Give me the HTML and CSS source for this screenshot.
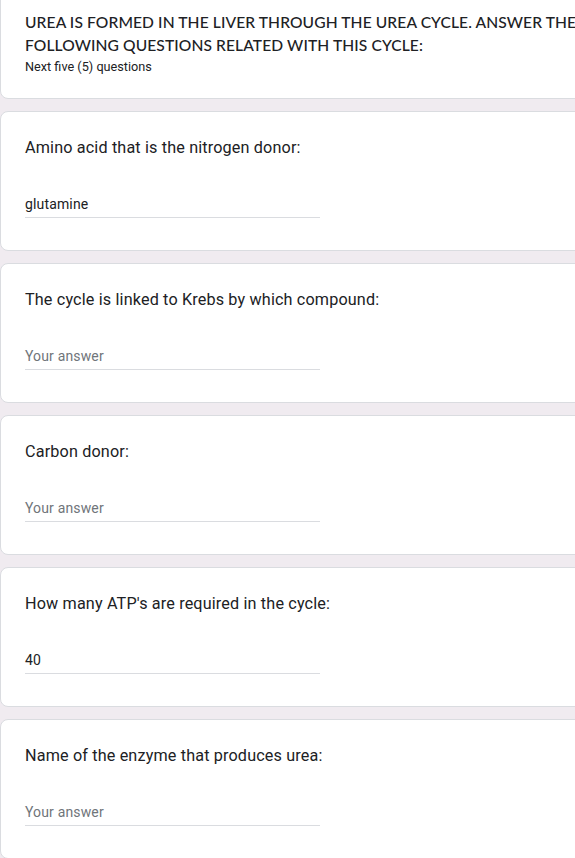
FILE: index.html
```html
<!DOCTYPE html>
<html>
<head>
<meta charset="utf-8">
<link rel="stylesheet" href="styles.css">
</head>
<body>
<div class="page">
  <div class="card header">
    <div class="title">UREA IS FORMED IN THE LIVER THROUGH THE UREA CYCLE. ANSWER THE FOLLOWING QUESTIONS RELATED WITH THIS CYCLE:</div>
    <div class="desc">Next five (5) questions</div>
  </div>
  <div class="card">
    <div class="question">Amino acid that is the nitrogen donor:</div>
    <div class="answer filled">glutamine</div>
  </div>
  <div class="card">
    <div class="question">The cycle is linked to Krebs by which compound:</div>
    <div class="answer">Your answer</div>
  </div>
  <div class="card">
    <div class="question">Carbon donor:</div>
    <div class="answer">Your answer</div>
  </div>
  <div class="card">
    <div class="question">How many ATP's are required in the cycle:</div>
    <div class="answer filled">40</div>
  </div>
  <div class="card">
    <div class="question">Name of the enzyme that produces urea:</div>
    <div class="answer">Your answer</div>
  </div>
</div>
</body>
</html>
```
FILE: styles.css
```css
html, body {
  margin: 0;
  padding: 0;
  background: #f0ebf0;
  overflow: hidden;
}
body {
  width: 575px;
  height: 858px;
  font-family: Roboto, "Liberation Sans", sans-serif;
  color: #202124;
}
.page {
  width: 700px;
  margin-top: -14px;
  display: flex;
  flex-direction: column;
  gap: 12px;
}
.card {
  background: #fff;
  border: 1px solid #dadce0;
  border-radius: 8px;
  padding: 24px 24px 32px 24px;
  display: flex;
  flex-direction: column;
}
.header {
  padding-bottom: 23px;
}
.title {
  font-family: Lato, Roboto, sans-serif;
  font-size: 15.6px;
  line-height: 23px;
  width: 600px;
  letter-spacing: 0.1px;
  font-weight: 500;
}
.desc {
  font-size: 12.7px;
  line-height: 16px;
  margin-top: 2px;
}
.question {
  font-size: 16.2px;
  line-height: 24px;
  letter-spacing: 0.15px;
}
.answer {
  margin-top: 32px;
  width: 295px;
  height: 25px;
  line-height: 24px;
  font-size: 14px;
  letter-spacing: 0.15px;
  color: #70757a;
  border-bottom: 1px solid #dadce0;
}
.answer.filled {
  color: #202124;
}
```
